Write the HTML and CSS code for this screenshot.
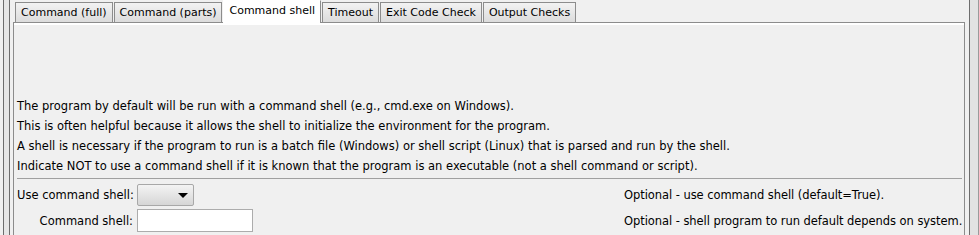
FILE: index.html
```html
<!DOCTYPE html>
<html lang="en">
<head>
<meta charset="UTF-8">
<title>Command shell</title>
<link rel="stylesheet" href="styles.css">
</head>
<body>
<div class="frame">
    <div class="left-edge"></div>
    <div class="tab-area">
        <div class="tab-bar">
            <div class="tab">Command (full)</div>
            <div class="tab">Command (parts)</div>
            <div class="tab selected">Command shell</div>
            <div class="tab">Timeout</div>
            <div class="tab">Exit Code Check</div>
            <div class="tab">Output Checks</div>
        </div>
        <div class="pane">
            <div class="desc">
                <p>The program by default will be run with a command shell (e.g., cmd.exe on Windows).</p>
                <p>This is often helpful because it allows the shell to initialize the environment for the program.</p>
                <p>A shell is necessary if the program to run is a batch file (Windows) or shell script (Linux) that is parsed and run by the shell.</p>
                <p>Indicate NOT to use a command shell if it is known that the program is an executable (not a shell command or script).</p>
            </div>
            <div class="sep"></div>
            <div class="form">
                <label class="first">Use command shell:</label>
                <div class="combo"><span class="arrow"></span></div>
                <span class="hint">Optional - use command shell (default=True).</span>
                <label>Command shell:</label>
                <div class="text-input"></div>
                <span class="hint">Optional - shell program to run default depends on system.</span>
            </div>
        </div>
    </div>
    <div class="right-edge"></div>
</div>
</body>
</html>
```

FILE: styles.css
```css
body {
    margin: 0;
    padding: 0;
    background-color: #f0f0f0;
    font-family: "DejaVu Sans", Verdana, sans-serif;
    font-size: 11.5px;
    color: #000;
    overflow: hidden;
}
.frame {
    display: flex;
    height: 235px;
}
.left-edge {
    width: 10px;
    margin-right: 3px;
    border-left: 3px solid #f0f0f0;
    box-sizing: border-box;
    background: #e6e6e6;
    box-shadow: inset 1px 0 0 #6d6d6d, inset -1px 0 0 #6d6d6d;
}
.tab-area {
    flex: 1;
    display: flex;
    flex-direction: column;
    min-width: 0;
}
.tab-bar {
    display: flex;
    height: 22px;
    align-items: flex-end;
    padding-left: 2px;
    font-size: 11px;
}
.tab {
    height: 19px;
    line-height: 19px;
    padding: 0 5px;
    border: 1px solid #8c8c8c;
    border-bottom: none;
    margin-right: 1px;
    background: linear-gradient(#f2f2f2, #dcdcdc);
    white-space: nowrap;
}
.tab.selected {
    height: 22px;
    line-height: 20px;
    background: #fff;
    margin-bottom: -1px;
    position: relative;
    z-index: 1;
    padding: 0 5px;
    border-color: #fff;
    border-right-color: #8c8c8c;
}
.pane {
    flex: 1;
    border: 1px solid #8c8c8c;
    border-bottom: none;
    box-shadow: inset 0 2px 0 #fff;
    background: #f0f0f0;
    padding: 0 2px 0 3px;
    white-space: nowrap;
}
.desc {
    padding-top: 73px;
}
.desc p {
    margin: 0;
    height: 20px;
    line-height: 20px;
}
.sep {
    height: 1px;
    background: #a0a0a0;
    margin: 2px 0 5px 0;
}
.form {
    display: grid;
    grid-template-columns: 120px 487px 1fr;
    row-gap: 3px;
    align-items: center;
}
.form label {
    text-align: right;
    padding-right: 4px;
}
.form label.first {
    text-align: left;
}
.hint {
    letter-spacing: -0.06px;
}
.combo {
    width: 55px;
    height: 20px;
    border: 1px solid #a8a8a8;
    border-radius: 2px;
    background: linear-gradient(#f4f4f4, #d6d6d6);
    position: relative;
}
.arrow {
    position: absolute;
    right: 5px;
    top: 8px;
    border-left: 5px solid transparent;
    border-right: 5px solid transparent;
    border-top: 5px solid #000;
}
.text-input {
    width: 114px;
    height: 21px;
    border: 1px solid #acacac;
    background: #fff;
}
.right-edge {
    width: 14px;
    border-left: 4px solid #f0f0f0;
    box-sizing: border-box;
    background: #e2e2e2;
    box-shadow: inset 1px 0 0 #6d6d6d, inset -1px 0 0 #9a9a9a;
}
```
